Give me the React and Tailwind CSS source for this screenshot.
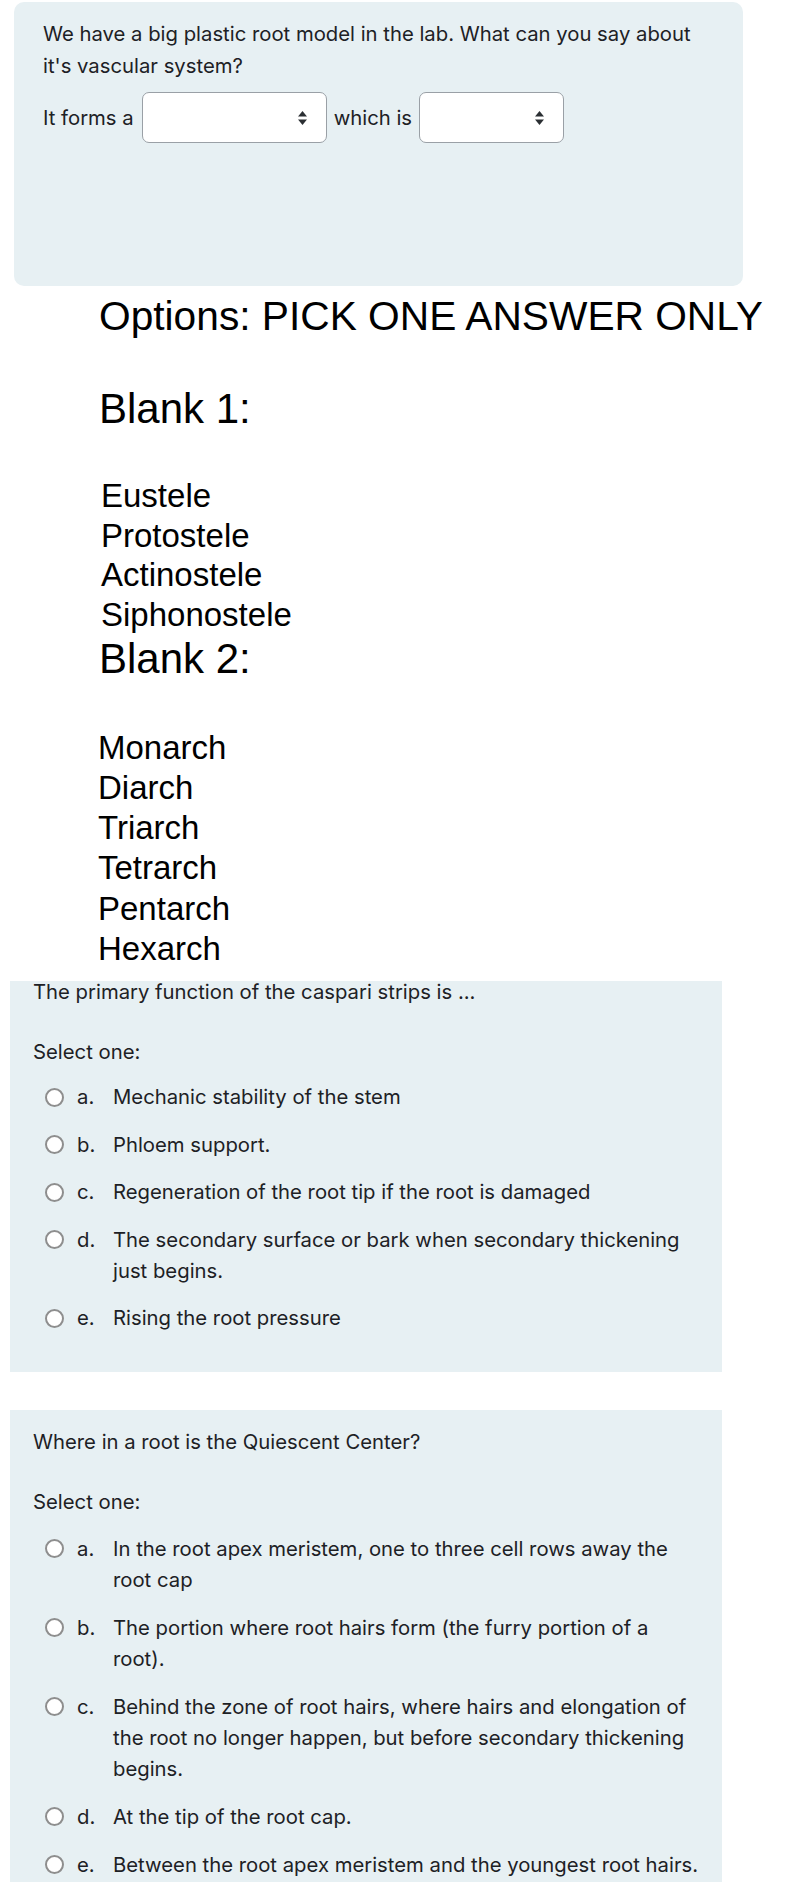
import React from "react";

const stele = ["Eustele", "Protostele", "Actinostele", "Siphonostele"];
const arch = ["Monarch", "Diarch", "Triarch", "Tetrarch", "Pentarch", "Hexarch"];

const caspari = [
  { key: "a.", lines: ["Mechanic stability of the stem"] },
  { key: "b.", lines: ["Phloem support."] },
  { key: "c.", lines: ["Regeneration of the root tip if the root is damaged"] },
  { key: "d.", lines: ["The secondary surface or bark when secondary thickening", "just begins."] },
  { key: "e.", lines: ["Rising the root pressure"] },
];

const quiescent = [
  { key: "a.", lines: ["In the root apex meristem, one to three cell rows away the", "root cap"] },
  { key: "b.", lines: ["The portion where root hairs form (the furry portion of a", "root)."] },
  {
    key: "c.",
    lines: [
      "Behind the zone of root hairs, where hairs and elongation of",
      "the root no longer happen, but before secondary thickening",
      "begins.",
    ],
  },
  { key: "d.", lines: ["At the tip of the root cap."] },
  { key: "e.", lines: ["Between the root apex meristem and the youngest root hairs."] },
];

function Select({ width }) {
  return (
    <div className={`relative h-[51px] rounded-[7px] border border-[#9aa0a6] bg-white ${width}`}>
      <svg className="absolute right-[19px] top-[18px]" width="9" height="14" viewBox="0 0 9 14">
        <path d="M4.5 0 L9 5.5 H0 Z" fill="#2b2f33" />
        <path d="M4.5 14 L9 8.5 H0 Z" fill="#2b2f33" />
      </svg>
    </div>
  );
}

function Option({ opt }) {
  return (
    <div className="flex items-start leading-[31px]">
      <span className="mt-[6.5px] ml-[35px] h-[19px] w-[19px] shrink-0 rounded-full border-2 border-[#8e8e8e] bg-white" />
      <span className="ml-[13px] w-[36px] shrink-0">{opt.key}</span>
      <div className="whitespace-nowrap">
        {opt.lines.map((l) => (
          <div key={l}>{l}</div>
        ))}
      </div>
    </div>
  );
}

export default function App() {
  return (
    <div className="min-h-[1882px] w-[801px] overflow-hidden bg-white font-['Liberation_Sans',Arial,sans-serif]">
      {/* cloze question */}
      <div className="ml-[14px] mt-[2px] h-[284px] w-[729px] rounded-[10px] bg-[#e7f0f3] pl-[29px] pt-[16px] font-['Inter',sans-serif] text-[20.3px] leading-[32px] text-[#1d2125]">
        <p>We have a big plastic root model in the lab. What can you say about</p>
        <p>it's vascular system?</p>
        <div className="mt-[10px] flex items-center">
          <span>It forms a</span>
          <div className="ml-[8px]">
            <Select width="w-[185px]" />
          </div>
          <span className="ml-[7px]">which is</span>
          <div className="ml-[7px]">
            <Select width="w-[145px]" />
          </div>
        </div>
      </div>

      {/* options text */}
      <div className="pl-[99px] text-black">
        <h2 className="mt-[6px] text-[40.7px] leading-[48px]">Options: PICK ONE ANSWER ONLY</h2>
        <h3 className="mt-[45px] text-[42px] leading-[48px]">Blank 1:</h3>
        <ul className="mt-[43px] pl-[2px] text-[33px] leading-[39.7px]">
          {stele.map((s) => (
            <li key={s}>{s}</li>
          ))}
        </ul>
        <h3 className="text-[42px] leading-[48px]">Blank 2:</h3>
        <ul className="-ml-[1px] mt-[45px] text-[33px] leading-[40.2px]">
          {arch.map((s) => (
            <li key={s}>{s}</li>
          ))}
        </ul>
      </div>

      {/* multichoice 1 */}
      <div className="ml-[10px] mt-[12px] h-[391px] w-[712px] bg-[#e7f0f3] font-['Inter',sans-serif] text-[20.3px] text-[#1d2125]">
        <p className="pl-[23px] leading-[22px]">The primary function of the caspari strips is ...</p>
        <p className="mt-[38px] pl-[23px] leading-[22px]">Select one:</p>
        <div className="mt-[18px] flex flex-col gap-[16.5px]">
          {caspari.map((o) => (
            <Option key={o.key} opt={o} />
          ))}
        </div>
      </div>

      {/* multichoice 2 */}
      <div className="ml-[10px] mt-[38px] h-[472px] w-[712px] overflow-hidden bg-[#e7f0f3] pt-[20px] font-['Inter',sans-serif] text-[20.3px] text-[#1d2125]">
        <p className="pl-[23px] leading-[24px]">Where in a root is the Quiescent Center?</p>
        <p className="mt-[36px] pl-[23px] leading-[24px]">Select one:</p>
        <div className="mt-[18.5px] flex flex-col gap-[17px]">
          {quiescent.map((o) => (
            <Option key={o.key} opt={o} />
          ))}
        </div>
      </div>
    </div>
  );
}
